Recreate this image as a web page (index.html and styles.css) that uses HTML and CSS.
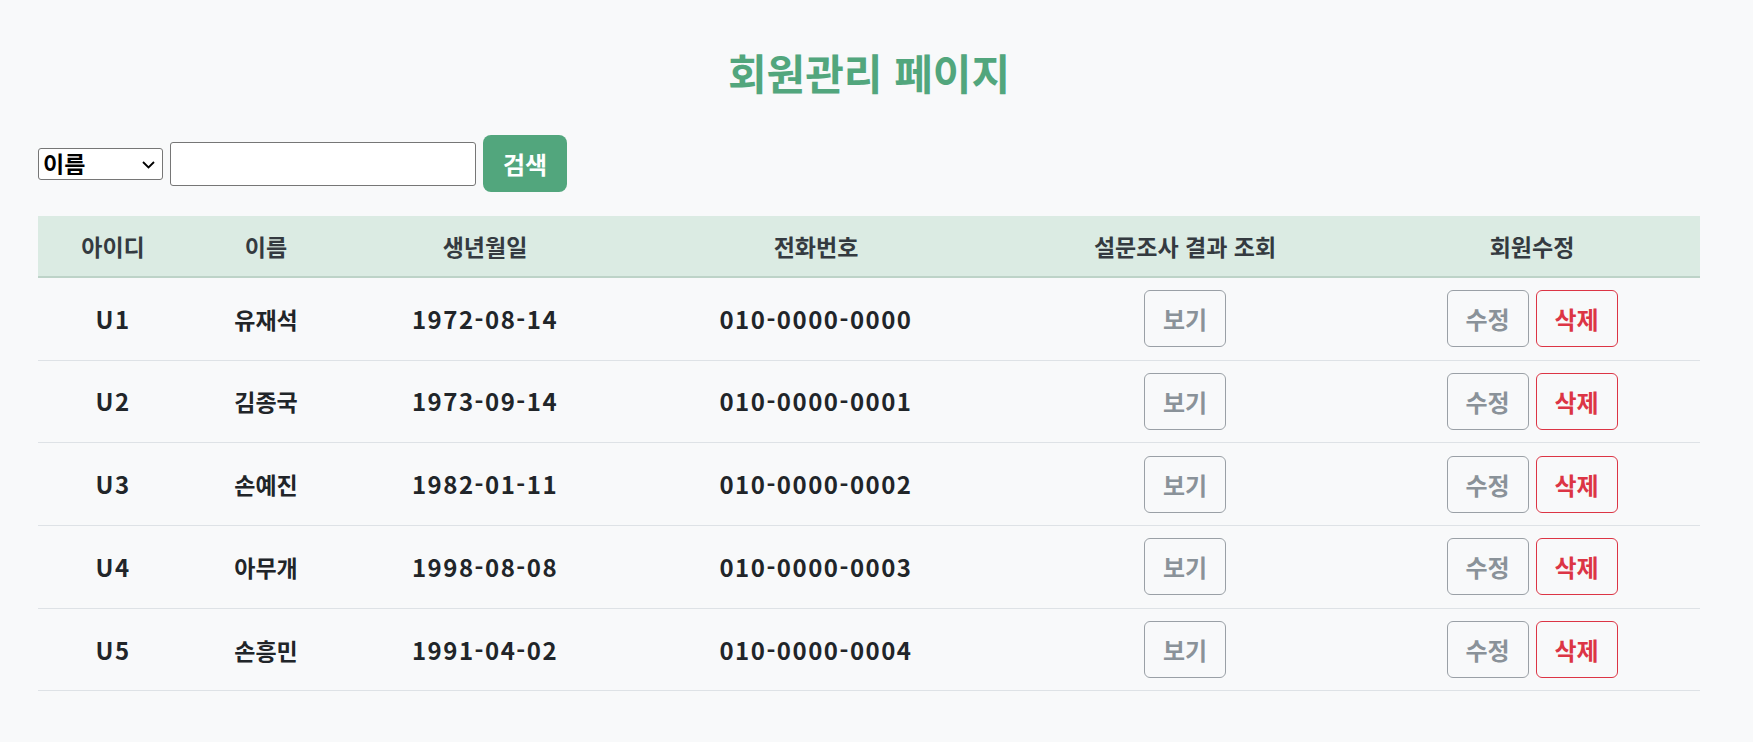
FILE: index.html
```html
<!DOCTYPE html>
<html lang="ko">
<head>
<meta charset="utf-8">
<title>회원관리 페이지</title>
<link rel="stylesheet" href="styles.css">
</head>
<body>
<div class="container">
  <h1 class="title">회원관리 페이지</h1>
  <form class="search">
    <span class="select-wrap">
      <select class="search-type">
        <option>이름</option>
        <option>아이디</option>
      </select>
      <svg class="chevron" width="13" height="8" viewBox="0 0 13 8"><path d="M1 1l5.5 5.5L12 1" fill="none" stroke="#000" stroke-width="1.8"/></svg>
    </span>
    <input class="search-input" type="text">
    <button class="btn-search" type="button">검색</button>
  </form>
  <table class="members">
    <colgroup>
      <col class="c1"><col class="c2"><col class="c3"><col class="c4"><col class="c5"><col class="c6">
    </colgroup>
    <thead>
      <tr>
        <th>아이디</th><th>이름</th><th>생년월일</th><th>전화번호</th><th>설문조사 결과 조회</th><th>회원수정</th>
      </tr>
    </thead>
    <tbody>
      <tr>
        <td class="num">U1</td><td>유재석</td><td class="num">1972-08-14</td><td class="num">010-0000-0000</td>
        <td><button class="btn btn-gray">보기</button></td>
        <td><div class="actions"><button class="btn btn-gray">수정</button><button class="btn btn-red">삭제</button></div></td>
      </tr>
      <tr>
        <td class="num">U2</td><td>김종국</td><td class="num">1973-09-14</td><td class="num">010-0000-0001</td>
        <td><button class="btn btn-gray">보기</button></td>
        <td><div class="actions"><button class="btn btn-gray">수정</button><button class="btn btn-red">삭제</button></div></td>
      </tr>
      <tr>
        <td class="num">U3</td><td>손예진</td><td class="num">1982-01-11</td><td class="num">010-0000-0002</td>
        <td><button class="btn btn-gray">보기</button></td>
        <td><div class="actions"><button class="btn btn-gray">수정</button><button class="btn btn-red">삭제</button></div></td>
      </tr>
      <tr>
        <td class="num">U4</td><td>아무개</td><td class="num">1998-08-08</td><td class="num">010-0000-0003</td>
        <td><button class="btn btn-gray">보기</button></td>
        <td><div class="actions"><button class="btn btn-gray">수정</button><button class="btn btn-red">삭제</button></div></td>
      </tr>
      <tr>
        <td class="num">U5</td><td>손흥민</td><td class="num">1991-04-02</td><td class="num">010-0000-0004</td>
        <td><button class="btn btn-gray">보기</button></td>
        <td><div class="actions"><button class="btn btn-gray">수정</button><button class="btn btn-red">삭제</button></div></td>
      </tr>
    </tbody>
  </table>
</div>
</body>
</html>
```
FILE: styles.css
```css
* { box-sizing: border-box; }
html, body {
  margin: 0;
  background: #f8f9fa;
  font-family: "Noto Sans CJK KR", "Noto Sans", sans-serif;
  color: #212529;
}
.container {
  width: 1662px;
  margin-left: 38px;
  padding-top: 48px;
}
.title {
  margin: 0;
  text-align: center;
  font-size: 42px;
  line-height: 48px;
  font-weight: 700;
  color: #52a67d;
}
.search {
  display: flex;
  align-items: center;
  gap: 7px;
  margin: 39px 0 0;
}
.select-wrap {
  position: relative;
  display: block;
  width: 125px;
  height: 32px;
}
.search-type {
  -webkit-appearance: none;
  appearance: none;
  display: block;
  width: 125px;
  height: 32px;
  font-family: inherit;
  font-size: 23px;
  line-height: 1;
  font-weight: 700;
  color: #000;
  background: #fff;
  border: 1px solid #767676;
  border-radius: 3px;
  padding: 0 4px;
}
.chevron {
  position: absolute;
  right: 8px;
  top: 13px;
  pointer-events: none;
}
.search-input {
  width: 306px;
  height: 44px;
  border: 1px solid #767676;
  border-radius: 3px;
  background: #fff;
}
.btn-search {
  width: 84px;
  height: 57px;
  border: none;
  border-radius: 8px;
  background: #52a67d;
  color: #fff;
  font-family: inherit;
  font-size: 24px;
  font-weight: 700;
  padding: 0;
}
.members {
  width: 1662px;
  margin-top: 24px;
  border-collapse: collapse;
  table-layout: fixed;
}
.c1 { width: 150px; }
.c2 { width: 156px; }
.c3 { width: 282px; }
.c4 { width: 380px; }
.c5 { width: 358px; }
.c6 { width: 336px; }
.members th {
  background: #dbebe3;
  color: #343a40;
  font-size: 23px;
  font-weight: 700;
  line-height: 30px;
  padding: 15px 8px;
  text-align: center;
  border-bottom: 2px solid #bdd3c8;
}
.members td {
  font-size: 23px;
  font-weight: 700;
  text-align: center;
  vertical-align: middle;
  padding: 12.3px 8px 12.4px;
  border-bottom: 1px solid #dee2e6;
  line-height: 30px;
}
.members td.num {
  font-size: 24px;
  letter-spacing: 1.5px;
}
.actions {
  display: flex;
  justify-content: center;
  gap: 7px;
}
.btn {
  width: 82px;
  height: 57px;
  background: transparent;
  border-radius: 6px;
  font-family: inherit;
  font-size: 24px;
  font-weight: 700;
  vertical-align: middle;
  padding: 0;
}
.btn-gray {
  border: 1px solid #9aa0a6;
  color: #8a9299;
}
.btn-red {
  border: 1px solid #dc3545;
  color: #dc3545;
}
```
